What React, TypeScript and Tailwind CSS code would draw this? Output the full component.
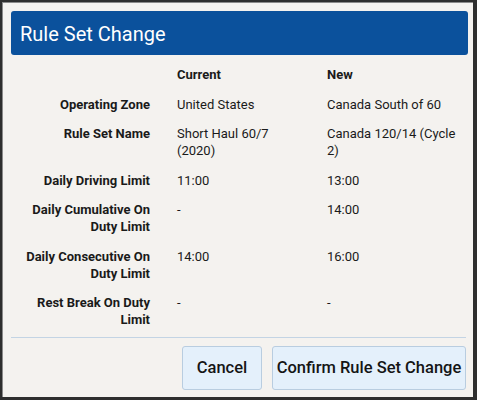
import React from "react";

const rows: { label: string; current: string; next: string }[] = [
  { label: "Operating Zone", current: "United States", next: "Canada South of 60" },
  { label: "Rule Set Name", current: "Short Haul 60/7 (2020)", next: "Canada 120/14 (Cycle 2)" },
  { label: "Daily Driving Limit", current: "11:00", next: "13:00" },
  { label: "Daily Cumulative On Duty Limit", current: "-", next: "14:00" },
  { label: "Daily Consecutive On Duty Limit", current: "14:00", next: "16:00" },
  { label: "Rest Break On Duty Limit", current: "-", next: "-" },
];

export default function App() {
  return (
    <div
      className="w-[477px] h-[400px] bg-[#2e2e2e] pl-[2px] pt-[2px] overflow-hidden"
      style={{ fontFamily: "Roboto, 'Noto Sans', sans-serif" }}
    >
      <div className="w-[471px] h-[395px] bg-[#f4f2ef] border-l border-t border-[#8a8a8a] pl-[8px] pr-[5px] pt-[8px] flex flex-col">
        <div className="h-[44px] bg-[#0b519c] rounded-[3px] flex items-center pl-[9px] pt-[1px] text-white text-[20px]">
          Rule Set Change
        </div>
        <div className="grid grid-cols-[139px_123px_139px] gap-x-[27px] gap-y-[12.5px] mt-[11px] text-[13px] leading-[17px] text-[#1a1a1a]">
          <div />
          <div className="font-bold">Current</div>
          <div className="font-bold">New</div>
          {rows.map((r) => (
            <React.Fragment key={r.label}>
              <div className="font-bold text-right">{r.label}</div>
              <div>{r.current}</div>
              <div>{r.next}</div>
            </React.Fragment>
          ))}
        </div>
        <div className="mt-[9px] h-[1px] w-[455px] bg-[#c3d4e4]" />
        <div className="flex justify-end gap-[10px] w-[455px] mt-[8px]">
          <button className="h-[44px] w-[80px] bg-[#e4f0fb] border border-[#b9cde0] rounded-[3px] text-[16.5px] font-medium text-[#151515]">
            Cancel
          </button>
          <button className="h-[44px] w-[194px] bg-[#e4f0fb] border border-[#b9cde0] rounded-[3px] text-[16.5px] font-medium text-[#151515]">
            Confirm Rule Set Change
          </button>
        </div>
      </div>
    </div>
  );
}
